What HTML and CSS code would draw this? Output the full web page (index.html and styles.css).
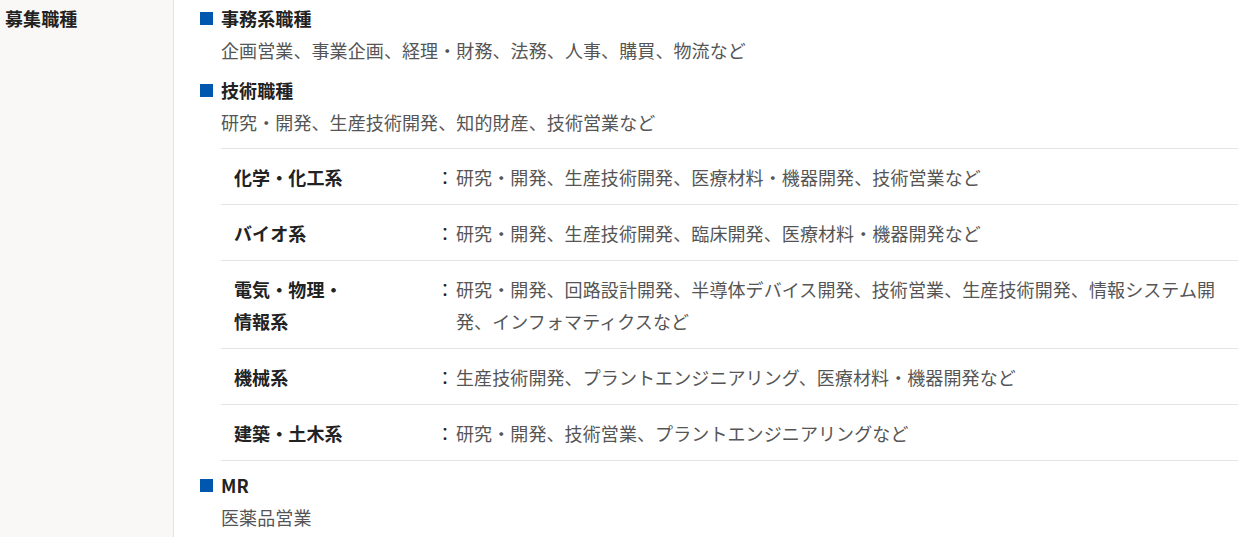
FILE: index.html
```html
<!DOCTYPE html>
<html lang="ja">
<head>
<meta charset="utf-8">
<title>募集職種</title>
<link rel="stylesheet" href="styles.css">
</head>
<body>
<div class="section">
  <div class="th">募集職種</div>
  <div class="td">
    <div class="cat">
      <h3 class="cat-title">事務系職種</h3>
      <p class="cat-desc">企画営業、事業企画、経理・財務、法務、人事、購買、物流など</p>
    </div>
    <div class="cat">
      <h3 class="cat-title">技術職種</h3>
      <p class="cat-desc">研究・開発、生産技術開発、知的財産、技術営業など</p>
      <ul class="fields">
        <li class="field"><span class="field-name">化学・化工系</span><span class="field-value"><span class="colon">：</span><span class="field-text">研究・開発、生産技術開発、医療材料・機器開発、技術営業など</span></span></li>
        <li class="field"><span class="field-name">バイオ系</span><span class="field-value"><span class="colon">：</span><span class="field-text">研究・開発、生産技術開発、臨床開発、医療材料・機器開発など</span></span></li>
        <li class="field"><span class="field-name">電気・物理・情報系</span><span class="field-value"><span class="colon">：</span><span class="field-text">研究・開発、回路設計開発、半導体デバイス開発、技術営業、生産技術開発、情報システム開発、インフォマティクスなど</span></span></li>
        <li class="field"><span class="field-name">機械系</span><span class="field-value"><span class="colon">：</span><span class="field-text">生産技術開発、プラントエンジニアリング、医療材料・機器開発など</span></span></li>
        <li class="field"><span class="field-name">建築・土木系</span><span class="field-value"><span class="colon">：</span><span class="field-text">研究・開発、技術営業、プラントエンジニアリングなど</span></span></li>
      </ul>
    </div>
    <div class="cat">
      <h3 class="cat-title">MR</h3>
      <p class="cat-desc">医薬品営業</p>
    </div>
  </div>
</div>
</body>
</html>
```
FILE: styles.css
```css
* { box-sizing: border-box; }
html, body {
  margin: 0;
  padding: 0;
  background: #fff;
}
body {
  font-family: "Noto Sans CJK JP", "Noto Sans", sans-serif;
  font-size: 18px;
  line-height: 32px;
  letter-spacing: 0.1px;
  color: #222;
}
.section {
  display: flex;
  min-height: 537px;
}
.th {
  flex: 0 0 174px;
  background: #f9f8f6;
  border-right: 1px solid #e6e4e0;
  padding: 2px 5px;
  font-weight: 700;
  color: #222;
}
.td {
  flex: 1;
  padding: 2px 0 0 26px;
}
.cat + .cat {
  margin-top: 8px;
}
.cat-title {
  margin: 0;
  font-size: 18px;
  line-height: 32px;
  font-weight: 700;
  color: #222;
  display: flex;
  align-items: center;
  gap: 8px;
}
.cat-title::before {
  content: "";
  width: 13px;
  height: 13px;
  background: #0057ae;
  flex: 0 0 13px;
}
.cat-desc {
  margin: 0;
  padding-left: 21px;
  color: #555;
}
.fields {
  list-style: none;
  margin: 10px 0 1px 21px;
  padding: 0;
  border-top: 1px solid #e4e4e4;
}
.field {
  display: flex;
  padding: 12px 10px 11px 13px;
  border-bottom: 1px solid #e4e4e4;
}
.field-name {
  flex: 0 0 202px;
  padding-right: 82px;
  font-weight: 700;
  color: #222;
}
.field-value {
  flex: 1;
  display: flex;
  color: #555;
}
.colon {
  flex: 0 0 20px;
  color: #222;
}
.field-text {
  flex: 1;
}
```
